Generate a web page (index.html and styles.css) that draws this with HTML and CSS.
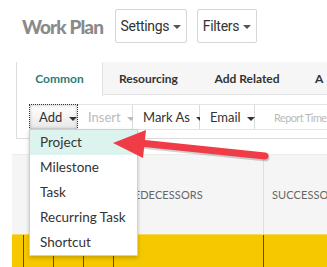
FILE: index.html
```html
<!DOCTYPE html>
<html lang="en">
<head>
    <meta charset="UTF-8">
    <meta name="viewport" content="width=device-width, initial-scale=1.0">
    <title>Work Plan</title>
    <link rel="stylesheet" href="styles.css">
</head>
<body>
    <div class="page">
        <div class="header">
            <h1>Work Plan</h1>
            <button class="head-btn settings">Settings <span class="caret"></span></button>
            <button class="head-btn filters">Filters <span class="caret"></span></button>
        </div>

        <div class="ribbon">
            <div class="tabs">
                <div class="tab active">Common</div>
                <div class="tab resourcing">Resourcing</div>
                <div class="tab related">Add Related</div>
                <div class="tab last">A</div>
            </div>
            <div class="toolbar">
                <button class="tool add">Add <span class="caret dark"></span></button>
                <button class="tool disabled insert">Insert <span class="caret light"></span></button>
                <button class="tool mark">Mark As <span class="caret dark"></span></button>
                <button class="tool email">Email <span class="caret dark"></span></button>
                <button class="tool disabled report">Report Time</button>
            </div>
        </div>

        <div class="grid">
            <div class="grid-head">
                <div class="col c0"></div>
                <div class="col c1"></div>
                <div class="col c2"></div>
                <div class="col c3"></div>
                <div class="col c4">PREDECESSORS</div>
                <div class="col c5">SUCCESSORS</div>
            </div>
            <div class="grid-row">
                <div class="cell c0"></div>
                <div class="cell c1"></div>
                <div class="cell c2"></div>
                <div class="cell c3"></div>
                <div class="cell c4"></div>
                <div class="cell c5"></div>
            </div>
        </div>

        <ul class="menu">
            <li class="selected">Project</li>
            <li>Milestone</li>
            <li>Task</li>
            <li>Recurring Task</li>
            <li>Shortcut</li>
        </ul>

        <svg class="arrow" width="327" height="267" viewBox="0 0 327 267">
            <line x1="140" y1="143" x2="265" y2="156" stroke="rgba(0,0,0,0.18)" stroke-width="7" stroke-linecap="round" transform="translate(1,2)"/>
            <line x1="140" y1="143" x2="265" y2="156" stroke="#f03c46" stroke-width="7" stroke-linecap="round"/>
            <polygon points="113,143 146,130 143,158" fill="#f03c46"/>
        </svg>
    </div>
</body>
</html>
```

FILE: styles.css
```css
body {
    margin: 0;
    background: #fff;
    font-family: 'Lato', 'Noto Sans', sans-serif;
    color: #333;
}
.page {
    position: relative;
    width: 327px;
    height: 267px;
    overflow: hidden;
}
.header {
    display: flex;
    align-items: center;
    padding: 9px 0 0 22px;
    height: 34px;
}
.header h1 {
    margin: 0 10px 0 0;
    font-size: 19px;
    font-weight: 900;
    letter-spacing: -0.9px;
    color: #8a8a8a;
    width: 83px;
    white-space: nowrap;
}
.head-btn {
    height: 34px;
    box-sizing: border-box;
    background: #fff;
    border: 1px solid #d6d6d6;
    border-radius: 2px;
    font-family: 'Roboto', sans-serif;
    font-size: 14px;
    color: #333;
    padding: 0;
    text-align: center;
    letter-spacing: -0.3px;
    white-space: nowrap;
}
.settings {
    width: 72px;
    margin-right: 10px;
}
.filters {
    width: 60px;
}
.caret {
    display: inline-block;
    width: 0;
    height: 0;
    border-left: 4px solid transparent;
    border-right: 4px solid transparent;
    border-top: 4px solid #555;
    vertical-align: middle;
    margin-left: 1px;
}
.caret.dark {
    border-top-color: #333;
}
.caret.light {
    border-top-color: #bbb;
}
.tool .caret {
    margin-left: 3px;
}
.ribbon {
    margin: 19px 0 0 16px;
    border-left: 1px solid #dcdcdc;
    border-bottom: 1px solid #dcdcdc;
    height: 76px;
}
.tabs {
    display: flex;
    height: 33px;
    background: #f6f6f6;
    border-bottom: 1px solid #e2e2e2;
    box-sizing: border-box;
}
.tab {
    flex: none;
    font-size: 12px;
    font-weight: 700;
    color: #333;
    line-height: 33px;
    text-align: center;
    white-space: nowrap;
}
.tab.resourcing {
    width: 91px;
}
.tab.related {
    width: 106px;
}
.tab.active {
    width: 86px;
    background: #fff;
    color: #2c7d77;
    border-right: 1px solid #e2e2e2;
    height: 34px;
    box-sizing: border-box;
}
.tab.last {
    width: 30px;
    text-align: left;
    padding-left: 15px;
}
.toolbar {
    display: flex;
    margin: 9px 0 0 12px;
    height: 26px;
    border-top: 1px solid #e4e4e4;
    border-bottom: 1px solid #e4e4e4;
    box-sizing: border-box;
}
.tool {
    flex: none;
    background: #fff;
    border: none;
    border-right: 1px solid #dcdcdc;
    font-family: 'Lato', sans-serif;
    font-size: 13px;
    color: #333;
    padding: 0 0 0 10px;
    text-align: left;
    height: 24px;
    white-space: nowrap;
}
.tool.disabled {
    color: #bbb;
}
.add {
    width: 49px;
    height: 26px;
    margin-top: -1px;
    padding-left: 9px;
    border: 1px dotted #333;
    background: linear-gradient(#ffffff, #e8e8e8);
    box-shadow: inset 0 0 3px rgba(0, 0, 0, 0.3);
}
.insert {
    width: 55px;
}
.mark {
    width: 67px;
}
.email {
    width: 55px;
}
.report {
    width: 72px;
    border-right: none;
    font-size: 11px;
    letter-spacing: -0.6px;
    padding-left: 19px;
}
.grid {
    margin: 15px 0 0 12px;
}
.grid-head,
.grid-row {
    display: flex;
}
.grid-head {
    height: 80px;
    background: #f5f5f5;
    border-top: 1px solid #ececec;
    box-sizing: border-box;
}
.grid-row {
    height: 40px;
    background: #f6c800;
    border-top: 1px solid #f9da5a;
}
.col,
.cell {
    flex: none;
    box-sizing: border-box;
}
.c0 { width: 12px; }
.c1 { width: 30px; }
.c2 { width: 30px; }
.c3 { width: 30px; }
.c4 { width: 150px; }
.c5 { width: 63px; }
.col {
    border-right: 1px solid #dedede;
    font-size: 11px;
    color: #666;
    line-height: 80px;
    white-space: nowrap;
    overflow: hidden;
    padding-left: 8px;
    letter-spacing: 0.1px;
}
.col.c0, .col.c1, .col.c2, .col.c3 {
    border-right: none;
    padding: 0;
}
.col.c4 {
    padding-left: 6px;
}
.col.c5 {
    border-right: none;
    text-overflow: clip;
}
.cell {
    border-right: 1px solid #5c4c10;
}
.cell.c5 {
    border-right: none;
}
.menu {
    position: absolute;
    left: 29px;
    top: 129px;
    width: 109px;
    margin: 0;
    padding: 0;
    list-style: none;
    background: #fff;
    border: 1px solid #cfcfcf;
    box-shadow: 0 2px 4px rgba(0, 0, 0, 0.2);
    box-sizing: border-box;
}
.menu li {
    height: 25px;
    line-height: 25px;
    padding-left: 10px;
    font-size: 13.5px;
    color: #333;
    white-space: nowrap;
}
.menu li.selected {
    background: #dcf3ee;
}
.arrow {
    position: absolute;
    left: 0;
    top: 0;
}
```
